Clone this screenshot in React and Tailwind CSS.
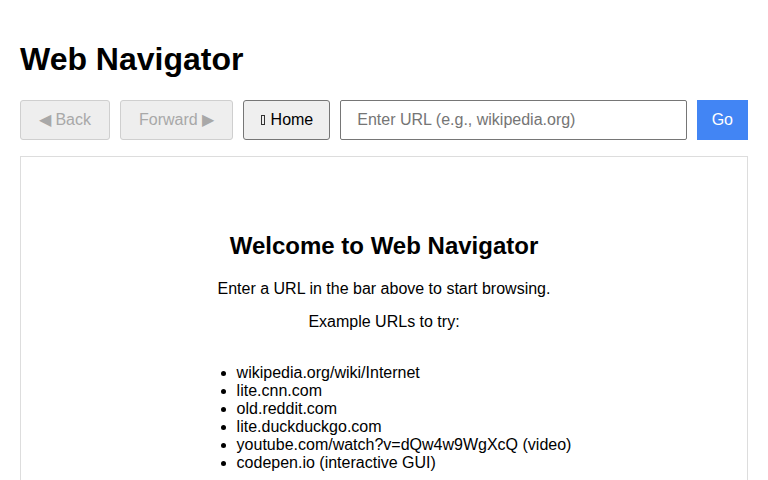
export default function App() {
    const examples = [
        "wikipedia.org/wiki/Internet",
        "lite.cnn.com",
        "old.reddit.com",
        "lite.duckduckgo.com",
        "youtube.com/watch?v=dQw4w9WgXcQ (video)",
        "codepen.io (interactive GUI)",
    ]

    return (
        <div className="min-h-screen bg-white px-5 pt-5 font-[Liberation_Sans,Arial,sans-serif] text-black">
            {/* title */}
            <h1 className="mt-[21px] mb-[22px] text-[32px] leading-[37px] font-bold">Web Navigator</h1>

            {/* nav bar */}
            <div className="flex gap-[10px] text-[16px] leading-[18px]">
                <button disabled className="rounded-[3px] border border-[#cfcfcf] bg-[#eeeeee] px-[18px] py-[10px] text-[#a8a8a8]">
                    ◀ Back
                </button>
                <button disabled className="rounded-[3px] border border-[#cfcfcf] bg-[#eeeeee] px-[18px] py-[10px] text-[#a8a8a8]">
                    Forward ▶
                </button>
                <button className="rounded-[3px] border border-[#767676] bg-[#efefef] px-4 py-[10px] text-black">
                    {/* missing-glyph box, as the icon renders */}
                    <span className="mx-[1px] inline-block h-[10px] w-[4px] border border-[#333]" /> Home
                </button>
                <input
                    placeholder="Enter URL (e.g., wikipedia.org)"
                    className="flex-1 rounded-[2px] border border-[#767676] px-4 py-[10px] placeholder:text-[#757575] outline-none"
                />
                <button className="bg-[#4285f4] px-[15px] py-[10px] text-white">Go</button>
            </div>

            {/* content */}
            <div className="mt-4 border border-[#dddddd] px-5 pt-[75px] pb-10 text-center">
                <h2 className="text-[24px] leading-[28px] font-bold">Welcome to Web Navigator</h2>
                <p className="mt-[20px] text-[16px] leading-[18px]">Enter a URL in the bar above to start browsing.</p>
                <p className="mt-[15px] text-[16px] leading-[18px]">Example URLs to try:</p>
                <ul className="mt-[33px] inline-block list-disc pl-10 text-left text-[16px] leading-[18px]">
                    {examples.map((u) => (
                        <li key={u}>{u}</li>
                    ))}
                </ul>
            </div>
        </div>
    )
}
